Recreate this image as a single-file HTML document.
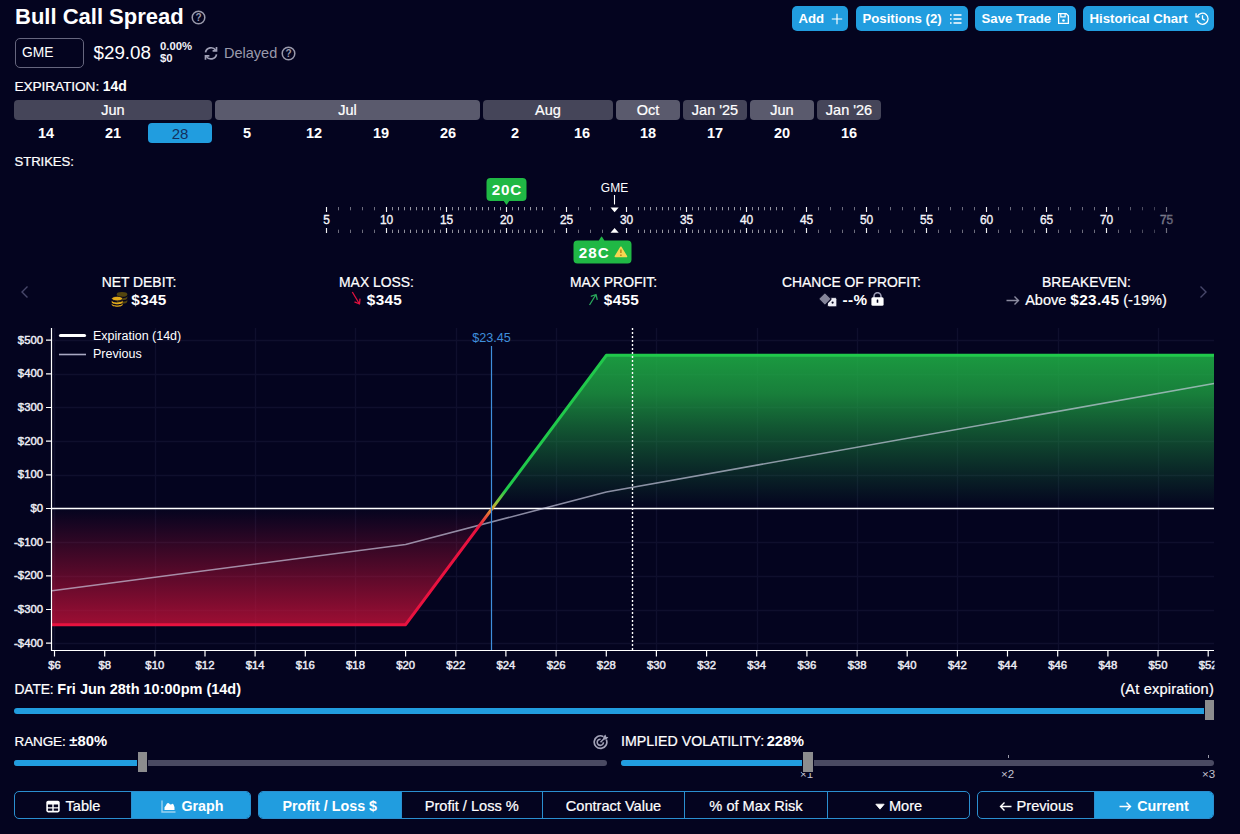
<!DOCTYPE html>
<html><head><meta charset="utf-8"><title>Bull Call Spread</title>
<style>
*{box-sizing:border-box;margin:0;padding:0}
html,body{width:1240px;height:834px;overflow:hidden;background:#04041f;color:#fff;font-family:"Liberation Sans",sans-serif;font-size:14px}
.a{position:absolute;white-space:nowrap}
.lbl,.st,.bb,.mon{-webkit-text-stroke:.22px currentColor}
.lbl b,.st b,.on{-webkit-text-stroke:0}
.btn{position:absolute;top:6px;height:25px;background:#219ddf;border-radius:5px;font-weight:bold;font-size:13.2px;line-height:25px;padding-left:6.5px;letter-spacing:0}
.mon{position:absolute;top:100px;height:20px;background:#5a5a6d;border-radius:4px;text-align:center;line-height:20px;font-size:14.5px}
.dk{background:#454559 !important}
.d{position:absolute;top:123px;width:64px;height:20px;text-align:center;line-height:21px;font-weight:bold;font-size:14.5px;border-radius:4px}
.lbl{position:absolute;font-size:13.5px;white-space:nowrap;letter-spacing:-0.1px}
.lbl b{font-size:14px;letter-spacing:0}
.st{position:absolute;top:274px;width:237px;text-align:center;font-size:13.9px;line-height:17px;white-space:nowrap}
.st b{font-size:15.3px;letter-spacing:.35px}
.bb{position:absolute;top:0;height:26px;line-height:28.500px;text-align:center;font-size:14.600px;border-right:1px solid #2a8fd0}
.grp{position:absolute;top:791px;height:28px;border:1px solid #2a8fd0;border-radius:5px;overflow:hidden}
.on{background:#219ddf;font-weight:bold;font-size:14.300px !important}
.trk{position:absolute;height:6px;border-radius:3px;background:#4a4a62}
.fil{position:absolute;height:6px;border-radius:3px;background:#219ddf}
.th{position:absolute;width:9.5px;height:20px;background:#8c8c8e;box-shadow:0 0 0 1px #04041f}
</style></head><body>
<!-- HEADER -->
<div class="a" style="left:15px;top:2.5px;font-size:22px;font-weight:bold;line-height:28px;letter-spacing:0">Bull Call Spread</div>
<svg class="a" style="left:190.500px;top:9.500px" width="15" height="15" viewBox="0 0 15 15"><circle cx="7.500" cy="7.500" r="6.300" fill="none" stroke="#9a9aac" stroke-width="1.500"/><text x="7.500" y="11" font-size="10" font-weight="bold" fill="#9a9aac" text-anchor="middle" font-family="Liberation Sans, sans-serif">?</text></svg>

<div class="btn" style="left:792px;width:56px">Add<svg style="position:absolute;left:39px;top:6.500px" width="12" height="12" viewBox="0 0 12 12"><path d="M6 .8v10.400M.8 6h10.400" stroke="#fff" stroke-width="1.150"/></svg></div>
<div class="btn" style="left:856px;width:112px">Positions (2)<svg style="position:absolute;left:93px;top:7px" width="13" height="12" viewBox="0 0 13 12"><path d="M4.5 2h8M4.5 6h8M4.5 10h8" stroke="#fff" stroke-width="1.3"/><path d="M1 2h1.6M1 6h1.6M1 10h1.6" stroke="#fff" stroke-width="1.6"/></svg></div>
<div class="btn" style="left:975px;width:101px">Save Trade<svg style="position:absolute;left:82px;top:6px" width="13" height="13" viewBox="0 0 12 12"><path d="M1.5 1.5h7l2 2v7h-9z" fill="none" stroke="#fff" stroke-width="1.2"/><path d="M3.5 1.5v3h4v-3" fill="none" stroke="#fff" stroke-width="1.1"/><circle cx="6" cy="7.8" r="1.2" fill="#fff"/></svg></div>
<div class="btn" style="left:1083px;width:131px">Historical Chart<svg style="position:absolute;left:111.500px;top:5px" width="15" height="15" viewBox="0 0 14 14"><path d="M2.2 5.2A5.2 5.2 0 1 1 2 8.6" fill="none" stroke="#fff" stroke-width="1.2"/><path d="M1 2.2v3.2h3.2" fill="none" stroke="#fff" stroke-width="1.2"/><path d="M7 4v3.3l2.2 1.3" fill="none" stroke="#fff" stroke-width="1.2"/></svg></div>

<div class="a" style="left:14.5px;top:38px;width:69.5px;height:29.5px;border:1px solid #66667e;border-radius:5px;line-height:28px;padding-left:6.5px;font-size:13.8px">GME</div>
<div class="a" style="left:93.5px;top:42px;font-size:18.8px;line-height:22px">$29.08</div>
<div class="a" style="left:160px;top:40px;font-size:11.300px;line-height:12px;font-weight:bold;color:#f0f0f8">0.00%<br>$0</div>
<svg class="a" style="left:202.500px;top:45.500px" width="16" height="15" viewBox="0 0 16 15"><path d="M2.500 6.400A5.600 5.600 0 0 1 12.700 4.300M13.500 8.300A5.600 5.600 0 0 1 3.300 10.400" fill="none" stroke="#a0a0b6" stroke-width="1.700"/><path d="M13.500 .9v3.900h-3.900M2.500 13.800v-3.900h3.900" fill="none" stroke="#a0a0b6" stroke-width="1.700"/></svg>
<div class="a" style="left:224px;top:45px;font-size:14.5px;line-height:17px;color:#9a9aac">Delayed</div>
<svg class="a" style="left:280.500px;top:45.500px" width="15" height="15" viewBox="0 0 15 15"><circle cx="7.500" cy="7.500" r="6.300" fill="none" stroke="#9a9aac" stroke-width="1.500"/><text x="7.500" y="11" font-size="10" font-weight="bold" fill="#9a9aac" text-anchor="middle" font-family="Liberation Sans, sans-serif">?</text></svg>

<!-- EXPIRATION -->
<div class="lbl" style="left:14.500px;top:78px;line-height:17px;font-size:13.700px">EXPIRATION: <b>14d</b></div>
<div class="mon dk" style="left:14px;width:198px">Jun</div>
<div class="mon" style="left:215px;width:265px">Jul</div>
<div class="mon dk" style="left:483px;width:130px">Aug</div>
<div class="mon" style="left:616px;width:64px">Oct</div>
<div class="mon dk" style="left:683px;width:64px">Jan '25</div>
<div class="mon" style="left:750px;width:64px">Jun</div>
<div class="mon dk" style="left:817px;width:64px">Jan '26</div>
<div class="d" style="left:14px">14</div>
<div class="d" style="left:81px">21</div>
<div class="d" style="left:148px;background:#219ddf;color:#12305e;font-weight:normal;font-size:15px">28</div>
<div class="d" style="left:215px">5</div>
<div class="d" style="left:282px">12</div>
<div class="d" style="left:349px">19</div>
<div class="d" style="left:416px">26</div>
<div class="d" style="left:483px">2</div>
<div class="d" style="left:550px">16</div>
<div class="d" style="left:616px">18</div>
<div class="d" style="left:683px">17</div>
<div class="d" style="left:750px">20</div>
<div class="d" style="left:817px">16</div>

<!-- STRIKES -->
<div class="lbl" style="left:14.500px;top:153px;line-height:17px;font-size:13.200px">STRIKES:</div>
<svg class="a" style="left:0;top:170px" width="1240" height="100" viewBox="0 170 1240 100" font-family="Liberation Sans, sans-serif">
<defs><linearGradient id="fade" x1="0" x2="1" y1="0" y2="0"><stop offset="0" stop-color="#04041f" stop-opacity="0"/><stop offset="1" stop-color="#04041f" stop-opacity="1"/></linearGradient></defs>
<g><path d="M326.5 207v5M326.5 233v-5" stroke="#fff" stroke-opacity="0.95" stroke-width="1.15"/><path d="M338.5 207v3.3M338.5 233v-3.3" stroke="#fff" stroke-opacity="0.42" stroke-width="1"/><path d="M350.5 207v3.3M350.5 233v-3.3" stroke="#fff" stroke-opacity="0.42" stroke-width="1"/><path d="M362.5 207v3.3M362.5 233v-3.3" stroke="#fff" stroke-opacity="0.42" stroke-width="1"/><path d="M374.5 207v3.3M374.5 233v-3.3" stroke="#fff" stroke-opacity="0.42" stroke-width="1"/><path d="M386.5 207v5M386.5 233v-5" stroke="#fff" stroke-opacity="0.95" stroke-width="1.15"/><path d="M392.5 207v3.3M392.5 233v-3.3" stroke="#fff" stroke-opacity="0.55" stroke-width="1"/><path d="M398.5 207v3.3M398.5 233v-3.3" stroke="#fff" stroke-opacity="0.6" stroke-width="1"/><path d="M404.5 207v3.3M404.5 233v-3.3" stroke="#fff" stroke-opacity="0.55" stroke-width="1"/><path d="M410.5 207v3.3M410.5 233v-3.3" stroke="#fff" stroke-opacity="0.6" stroke-width="1"/><path d="M416.5 207v3.3M416.5 233v-3.3" stroke="#fff" stroke-opacity="0.55" stroke-width="1"/><path d="M422.5 207v3.3M422.5 233v-3.3" stroke="#fff" stroke-opacity="0.6" stroke-width="1"/><path d="M428.5 207v3.3M428.5 233v-3.3" stroke="#fff" stroke-opacity="0.55" stroke-width="1"/><path d="M434.5 207v3.3M434.5 233v-3.3" stroke="#fff" stroke-opacity="0.6" stroke-width="1"/><path d="M440.5 207v3.3M440.5 233v-3.3" stroke="#fff" stroke-opacity="0.55" stroke-width="1"/><path d="M446.5 207v5M446.5 233v-5" stroke="#fff" stroke-opacity="0.95" stroke-width="1.15"/><path d="M452.5 207v3.3M452.5 233v-3.3" stroke="#fff" stroke-opacity="0.55" stroke-width="1"/><path d="M458.5 207v3.3M458.5 233v-3.3" stroke="#fff" stroke-opacity="0.6" stroke-width="1"/><path d="M464.5 207v3.3M464.5 233v-3.3" stroke="#fff" stroke-opacity="0.55" stroke-width="1"/><path d="M470.5 207v3.3M470.5 233v-3.3" stroke="#fff" stroke-opacity="0.6" stroke-width="1"/><path d="M476.5 207v3.3M476.5 233v-3.3" stroke="#fff" stroke-opacity="0.55" stroke-width="1"/><path d="M482.5 207v3.3M482.5 233v-3.3" stroke="#fff" stroke-opacity="0.6" stroke-width="1"/><path d="M488.5 207v3.3M488.5 233v-3.3" stroke="#fff" stroke-opacity="0.55" stroke-width="1"/><path d="M494.5 207v3.3M494.5 233v-3.3" stroke="#fff" stroke-opacity="0.6" stroke-width="1"/><path d="M500.5 207v3.3M500.5 233v-3.3" stroke="#fff" stroke-opacity="0.55" stroke-width="1"/><path d="M506.5 207v5M506.5 233v-5" stroke="#fff" stroke-opacity="0.95" stroke-width="1.15"/><path d="M512.5 207v3.3M512.5 233v-3.3" stroke="#fff" stroke-opacity="0.55" stroke-width="1"/><path d="M518.5 207v3.3M518.5 233v-3.3" stroke="#fff" stroke-opacity="0.6" stroke-width="1"/><path d="M524.5 207v3.3M524.5 233v-3.3" stroke="#fff" stroke-opacity="0.55" stroke-width="1"/><path d="M530.5 207v3.3M530.5 233v-3.3" stroke="#fff" stroke-opacity="0.6" stroke-width="1"/><path d="M536.5 207v3.3M536.5 233v-3.3" stroke="#fff" stroke-opacity="0.55" stroke-width="1"/><path d="M542.5 207v3.3M542.5 233v-3.3" stroke="#fff" stroke-opacity="0.6" stroke-width="1"/><path d="M554.5 207v3.3M554.5 233v-3.3" stroke="#fff" stroke-opacity="0.42" stroke-width="1"/><path d="M566.5 207v5M566.5 233v-5" stroke="#fff" stroke-opacity="0.95" stroke-width="1.15"/><path d="M578.5 207v3.3M578.5 233v-3.3" stroke="#fff" stroke-opacity="0.42" stroke-width="1"/><path d="M590.5 207v3.3M590.5 233v-3.3" stroke="#fff" stroke-opacity="0.42" stroke-width="1"/><path d="M602.5 207v3.3M602.5 233v-3.3" stroke="#fff" stroke-opacity="0.42" stroke-width="1"/><path d="M626.5 207v5M626.5 233v-5" stroke="#fff" stroke-opacity="0.95" stroke-width="1.15"/><path d="M638.5 207v3.3M638.5 233v-3.3" stroke="#fff" stroke-opacity="0.6" stroke-width="1"/><path d="M644.5 207v3.3M644.5 233v-3.3" stroke="#fff" stroke-opacity="0.55" stroke-width="1"/><path d="M650.5 207v3.3M650.5 233v-3.3" stroke="#fff" stroke-opacity="0.6" stroke-width="1"/><path d="M656.5 207v3.3M656.5 233v-3.3" stroke="#fff" stroke-opacity="0.55" stroke-width="1"/><path d="M662.5 207v3.3M662.5 233v-3.3" stroke="#fff" stroke-opacity="0.6" stroke-width="1"/><path d="M668.5 207v3.3M668.5 233v-3.3" stroke="#fff" stroke-opacity="0.55" stroke-width="1"/><path d="M674.5 207v3.3M674.5 233v-3.3" stroke="#fff" stroke-opacity="0.6" stroke-width="1"/><path d="M680.5 207v3.3M680.5 233v-3.3" stroke="#fff" stroke-opacity="0.55" stroke-width="1"/><path d="M686.5 207v5M686.5 233v-5" stroke="#fff" stroke-opacity="0.95" stroke-width="1.15"/><path d="M692.5 207v3.3M692.5 233v-3.3" stroke="#fff" stroke-opacity="0.55" stroke-width="1"/><path d="M698.5 207v3.3M698.5 233v-3.3" stroke="#fff" stroke-opacity="0.6" stroke-width="1"/><path d="M704.5 207v3.3M704.5 233v-3.3" stroke="#fff" stroke-opacity="0.55" stroke-width="1"/><path d="M710.5 207v3.3M710.5 233v-3.3" stroke="#fff" stroke-opacity="0.6" stroke-width="1"/><path d="M716.5 207v3.3M716.5 233v-3.3" stroke="#fff" stroke-opacity="0.55" stroke-width="1"/><path d="M722.5 207v3.3M722.5 233v-3.3" stroke="#fff" stroke-opacity="0.6" stroke-width="1"/><path d="M728.5 207v3.3M728.5 233v-3.3" stroke="#fff" stroke-opacity="0.55" stroke-width="1"/><path d="M734.5 207v3.3M734.5 233v-3.3" stroke="#fff" stroke-opacity="0.6" stroke-width="1"/><path d="M740.5 207v3.3M740.5 233v-3.3" stroke="#fff" stroke-opacity="0.55" stroke-width="1"/><path d="M746.5 207v5M746.5 233v-5" stroke="#fff" stroke-opacity="0.95" stroke-width="1.15"/><path d="M752.5 207v3.3M752.5 233v-3.3" stroke="#fff" stroke-opacity="0.55" stroke-width="1"/><path d="M758.5 207v3.3M758.5 233v-3.3" stroke="#fff" stroke-opacity="0.6" stroke-width="1"/><path d="M764.5 207v3.3M764.5 233v-3.3" stroke="#fff" stroke-opacity="0.55" stroke-width="1"/><path d="M770.5 207v3.3M770.5 233v-3.3" stroke="#fff" stroke-opacity="0.6" stroke-width="1"/><path d="M776.5 207v3.3M776.5 233v-3.3" stroke="#fff" stroke-opacity="0.55" stroke-width="1"/><path d="M782.5 207v3.3M782.5 233v-3.3" stroke="#fff" stroke-opacity="0.6" stroke-width="1"/><path d="M794.5 207v3.3M794.5 233v-3.3" stroke="#fff" stroke-opacity="0.42" stroke-width="1"/><path d="M806.5 207v5M806.5 233v-5" stroke="#fff" stroke-opacity="0.95" stroke-width="1.15"/><path d="M818.5 207v3.3M818.5 233v-3.3" stroke="#fff" stroke-opacity="0.42" stroke-width="1"/><path d="M830.5 207v3.3M830.5 233v-3.3" stroke="#fff" stroke-opacity="0.42" stroke-width="1"/><path d="M842.5 207v3.3M842.5 233v-3.3" stroke="#fff" stroke-opacity="0.42" stroke-width="1"/><path d="M854.5 207v3.3M854.5 233v-3.3" stroke="#fff" stroke-opacity="0.42" stroke-width="1"/><path d="M866.5 207v5M866.5 233v-5" stroke="#fff" stroke-opacity="0.95" stroke-width="1.15"/><path d="M878.5 207v3.3M878.5 233v-3.3" stroke="#fff" stroke-opacity="0.42" stroke-width="1"/><path d="M890.5 207v3.3M890.5 233v-3.3" stroke="#fff" stroke-opacity="0.42" stroke-width="1"/><path d="M902.5 207v3.3M902.5 233v-3.3" stroke="#fff" stroke-opacity="0.42" stroke-width="1"/><path d="M914.5 207v3.3M914.5 233v-3.3" stroke="#fff" stroke-opacity="0.42" stroke-width="1"/><path d="M926.5 207v5M926.5 233v-5" stroke="#fff" stroke-opacity="0.95" stroke-width="1.15"/><path d="M938.5 207v3.3M938.5 233v-3.3" stroke="#fff" stroke-opacity="0.42" stroke-width="1"/><path d="M950.5 207v3.3M950.5 233v-3.3" stroke="#fff" stroke-opacity="0.42" stroke-width="1"/><path d="M962.5 207v3.3M962.5 233v-3.3" stroke="#fff" stroke-opacity="0.42" stroke-width="1"/><path d="M974.5 207v3.3M974.5 233v-3.3" stroke="#fff" stroke-opacity="0.42" stroke-width="1"/><path d="M986.5 207v5M986.5 233v-5" stroke="#fff" stroke-opacity="0.95" stroke-width="1.15"/><path d="M998.5 207v3.3M998.5 233v-3.3" stroke="#fff" stroke-opacity="0.42" stroke-width="1"/><path d="M1010.5 207v3.3M1010.5 233v-3.3" stroke="#fff" stroke-opacity="0.42" stroke-width="1"/><path d="M1022.5 207v3.3M1022.5 233v-3.3" stroke="#fff" stroke-opacity="0.42" stroke-width="1"/><path d="M1034.5 207v3.3M1034.5 233v-3.3" stroke="#fff" stroke-opacity="0.42" stroke-width="1"/><path d="M1046.5 207v5M1046.5 233v-5" stroke="#fff" stroke-opacity="0.95" stroke-width="1.15"/><path d="M1058.5 207v3.3M1058.5 233v-3.3" stroke="#fff" stroke-opacity="0.42" stroke-width="1"/><path d="M1070.5 207v3.3M1070.5 233v-3.3" stroke="#fff" stroke-opacity="0.42" stroke-width="1"/><path d="M1082.5 207v3.3M1082.5 233v-3.3" stroke="#fff" stroke-opacity="0.42" stroke-width="1"/><path d="M1094.5 207v3.3M1094.5 233v-3.3" stroke="#fff" stroke-opacity="0.42" stroke-width="1"/><path d="M1106.5 207v5M1106.5 233v-5" stroke="#fff" stroke-opacity="0.95" stroke-width="1.15"/><path d="M1118.5 207v3.3M1118.5 233v-3.3" stroke="#fff" stroke-opacity="0.42" stroke-width="1"/><path d="M1130.5 207v3.3M1130.5 233v-3.3" stroke="#fff" stroke-opacity="0.42" stroke-width="1"/><path d="M1142.5 207v3.3M1142.5 233v-3.3" stroke="#fff" stroke-opacity="0.42" stroke-width="1"/><path d="M1154.5 207v3.3M1154.5 233v-3.3" stroke="#fff" stroke-opacity="0.42" stroke-width="1"/><path d="M1166.5 207v5M1166.5 233v-5" stroke="#fff" stroke-opacity="0.95" stroke-width="1.15"/></g>
<g fill="#f4f4fa" stroke="#f4f4fa" stroke-width=".35" font-size="11.900"><text x="326.5" y="223.700" text-anchor="middle">5</text><text x="386.5" y="223.700" text-anchor="middle">10</text><text x="446.5" y="223.700" text-anchor="middle">15</text><text x="506.5" y="223.700" text-anchor="middle">20</text><text x="566.5" y="223.700" text-anchor="middle">25</text><text x="626.5" y="223.700" text-anchor="middle">30</text><text x="686.5" y="223.700" text-anchor="middle">35</text><text x="746.5" y="223.700" text-anchor="middle">40</text><text x="806.5" y="223.700" text-anchor="middle">45</text><text x="866.5" y="223.700" text-anchor="middle">50</text><text x="926.5" y="223.700" text-anchor="middle">55</text><text x="986.5" y="223.700" text-anchor="middle">60</text><text x="1046.5" y="223.700" text-anchor="middle">65</text><text x="1106.5" y="223.700" text-anchor="middle">70</text><text x="1166.5" y="223.700" text-anchor="middle">75</text></g>
<rect x="1112" y="200" width="100" height="40" fill="url(#fade)"/>
<rect x="1212" y="200" width="28" height="40" fill="#04041f"/>
<!-- 20C -->
<path d="M490.500 178h32a4 4 0 0 1 4 4v15a4 4 0 0 1 -4 4h-13.200l-2.400 3.600q-.4 .5 -.8 0l-2.400-3.600H490.500a4 4 0 0 1 -4-4v-15a4 4 0 0 1 4-4z" fill="#20b845"/>
<text x="506.800" y="195.300" font-size="15.200" letter-spacing=".8" font-weight="bold" fill="#fff" text-anchor="middle">20C</text>
<!-- GME marker -->
<text x="614.500" y="192" font-size="12" fill="#fff" text-anchor="middle">GME</text>
<path d="M614.500 195v9.500" stroke="#fff" stroke-width="1.100"/>
<path d="M610.500 207.500h8.200l-4.100 4.700z" fill="#fff"/>
<path d="M610.500 232.700h8.200l-4.100-4.700z" fill="#fff"/>
<!-- 28C -->
<path d="M577.500 240.500h21.300l2.400-3.700q.4-.5 .8 0l2.400 3.700H627.500a4 4 0 0 1 4 4v15a4 4 0 0 1 -4 4H577.500a4 4 0 0 1 -4-4v-15a4 4 0 0 1 4-4z" fill="#20b845"/>
<text x="578.800" y="257.500" font-size="15.200" letter-spacing="1" font-weight="bold" fill="#fff">28C</text>
<path d="M620.900 247.200l5.600 9.300h-11.200z" fill="#f5d652" stroke="#f5d652" stroke-width="1.500" stroke-linejoin="round"/>
<path d="M620.900 249.600v3.400M620.900 254.500v1.400" stroke="#b9821c" stroke-width="1.500"/>
</svg>

<!-- STATS -->
<svg class="a" style="left:20px;top:285px" width="10" height="14" viewBox="0 0 10 14"><path d="M7.500 1.500L2 7l5.500 5.500" fill="none" stroke="#47476a" stroke-width="1.400"/></svg>
<svg class="a" style="left:1198px;top:285px" width="10" height="14" viewBox="0 0 10 14"><path d="M2.500 1.500L8 7l-5.500 5.500" fill="none" stroke="#47476a" stroke-width="1.400"/></svg>
<div class="st" style="left:20.500px">NET DEBIT:<br><svg style="vertical-align:-2px;margin-right:3px" width="17" height="16" viewBox="0 0 17 16"><g fill="#54450f"><ellipse cx="11" cy="3.400" rx="5.300" ry="2.300"/><path d="M5.700 5c0 3 10.600 3 10.600 0v2c0 3-10.600 3-10.600 0zM5.700 8.500c0 3 10.600 3 10.600 0v2c0 3-10.600 3-10.600 0z"/></g><g fill="#e2aa1a"><ellipse cx="6.200" cy="7.600" rx="5.500" ry="2.300" stroke="#04041f" stroke-width=".8"/><path d="M.7 9.300c0 3 11 3 11 0v1.700c0 3-11 3-11 0zM.7 12.300c0 3 11 3 11 0v1.300c0 3-11 3-11 0z"/></g></svg><b>$345</b></div>
<div class="st" style="left:258px">MAX LOSS:<br><svg style="vertical-align:0px;margin-right:6px" width="10" height="14" viewBox="0 0 10 14"><path d="M1.300 1l7.200 12M9 7.600l-.5 5.400l-5-2.200" fill="none" stroke="#e0123f" stroke-width="1.300" stroke-linejoin="round"/></svg><b>$345</b></div>
<div class="st" style="left:495px">MAX PROFIT:<br><svg style="vertical-align:-1px;margin-right:6px" width="10" height="13" viewBox="0 0 10 13"><path d="M1.500 12l6.500-10.500M2.800 3.300l5.200-1.800l1.300 5.300" fill="none" stroke="#2aa85c" stroke-width="1.300" stroke-linejoin="round"/></svg><b>$455</b></div>
<div class="st" style="left:733px">CHANCE OF PROFIT:<br><svg style="vertical-align:-1.500px;margin-right:6px" width="18" height="14" viewBox="0 0 18 14"><rect x="8.500" y="4.600" width="9.300" height="9.200" rx="1.600" fill="#ededf4" stroke="#04041f" stroke-width=".8"/><rect x="1.300" y="1.300" width="9.200" height="9.200" rx="1.200" transform="rotate(45 5.900 5.900)" fill="#85859a" stroke="#04041f" stroke-width="1.100"/><circle cx="13.600" cy="9.600" r="1.100" fill="#04041f"/></svg><b>--%</b><svg style="vertical-align:-1px;margin-left:4px" width="13" height="14" viewBox="0 0 13 14"><path d="M3 6V4.200a3.500 3.500 0 0 1 7 0V6" fill="none" stroke="#9a9ab2" stroke-width="1.600"/><rect x=".4" y="5.300" width="12.200" height="8.500" rx="1.500" fill="#fff"/><rect x="5.700" y="7.600" width="1.600" height="3.200" rx=".5" fill="#04041f"/></svg></div>
<div class="st" style="left:968px">BREAKEVEN:<br><span style="font-size:14.500px"><svg style="vertical-align:-1px;margin-right:5px" width="14" height="11" viewBox="0 0 14 11"><path d="M.5 5.500h12M8.500 1.500l4 4l-4 4" fill="none" stroke="#8b8ba0" stroke-width="1.400"/></svg>Above <b>$23.45</b> (-19%)</span></div>

<svg class="a" style="left:0;top:322px" width="1240" height="356" viewBox="0 322 1240 356" font-family="Liberation Sans, sans-serif">
<defs>
<linearGradient id="gG" gradientUnits="userSpaceOnUse" x1="0" y1="355.3" x2="0" y2="508.5"><stop offset="0" stop-color="#1fb446" stop-opacity=".85"/><stop offset=".25" stop-color="#1fa844" stop-opacity=".75"/><stop offset="1" stop-color="#1c8a40" stop-opacity="0"/></linearGradient>
<linearGradient id="gR" gradientUnits="userSpaceOnUse" x1="0" y1="508.5" x2="0" y2="624.7"><stop offset="0" stop-color="#c81038" stop-opacity="0"/><stop offset="1" stop-color="#d0113a" stop-opacity=".75"/></linearGradient>
<linearGradient id="gL" gradientUnits="userSpaceOnUse" x1="0" y1="355.3" x2="0" y2="624.7"><stop offset="0" stop-color="#20c94b"/><stop offset=".50" stop-color="#20c94b"/><stop offset=".545" stop-color="#8cc43c"/><stop offset=".569" stop-color="#e0a030"/><stop offset=".60" stop-color="#e8503a"/><stop offset=".64" stop-color="#e8123f"/><stop offset="1" stop-color="#e8123f"/></linearGradient>
<clipPath id="cp"><rect x="52.0" y="326" width="1162.0" height="324.5"/></clipPath>
</defs>
<path d="M52.0 643.5H1214.0M52.0 610.5H1214.0M52.0 576.5H1214.0M52.0 542.5H1214.0M52.0 508.5H1214.0M52.0 475.5H1214.0M52.0 441.5H1214.0M52.0 407.5H1214.0M52.0 374.5H1214.0M52.0 340.5H1214.0M54.5 328V650M155.5 328V650M255.5 328V650M355.5 328V650M456.5 328V650M556.5 328V650M656.5 328V650M757.5 328V650M857.5 328V650M957.5 328V650M1058.5 328V650M1158.5 328V650" stroke="#9c9ce0" stroke-opacity=".075" stroke-width="1.4" fill="none"/>
<path d="M492.1 508.5L606.3 355.3H1214.0V508.5z" fill="url(#gG)"/>
<path d="M52.0 508.5H492.1L405.6 624.7H52.0z" fill="url(#gR)"/>
<path d="M52.0 508.5H1214.0" stroke="#fff" stroke-width="1.3"/>
<path d="M52.0 590.7L405.6 544.5L606.3 492.0L1214.0 383.5" stroke="#d0d0e6" stroke-opacity=".66" stroke-width="1.600" fill="none" stroke-linejoin="round"/>
<path d="M52.0 624.7H405.6L606.3 355.3H1214.0" stroke="url(#gL)" stroke-width="3" fill="none" stroke-linejoin="round" clip-path="url(#cp)"/>
<path d="M491.5 346V650" stroke="#3f8fdc" stroke-width="1.2"/>
<text x="491.5" y="342" font-size="12.600" fill="#3f8fdc" text-anchor="middle">$23.45</text>
<path d="M632.5 328V650" stroke="#fff" stroke-width="1.4" stroke-dasharray="2 2"/>
<path d="M51.5 328V651M51 650.5H1214.0M46 643.2h5.5M46 609.5h5.5M46 575.9h5.5M46 542.2h5.5M46 508.5h5.5M46 474.8h5.5M46 441.1h5.5M46 407.5h5.5M46 373.8h5.5M46 340.1h5.5M54.5 650.5v6M104.7 650.5v6M154.8 650.5v6M205.0 650.5v6M255.1 650.5v6M305.3 650.5v6M355.5 650.5v6M405.6 650.5v6M455.8 650.5v6M505.9 650.5v6M556.1 650.5v6M606.3 650.5v6M656.4 650.5v6M706.6 650.5v6M756.7 650.5v6M806.9 650.5v6M857.1 650.5v6M907.2 650.5v6M957.4 650.5v6M1007.5 650.5v6M1057.7 650.5v6M1107.9 650.5v6M1158.0 650.5v6M1208.2 650.5v6" stroke="#fff" stroke-width="1.2" fill="none"/>
<g font-size="11.300" fill="#ececf4" stroke="#ececf4" stroke-width=".45" text-anchor="end"><text x="43" y="646.6">-$400</text><text x="43" y="612.9">-$300</text><text x="43" y="579.3">-$200</text><text x="43" y="545.6">-$100</text><text x="43" y="511.9">$0</text><text x="43" y="478.2">$100</text><text x="43" y="444.5">$200</text><text x="43" y="410.9">$300</text><text x="43" y="377.2">$400</text><text x="43" y="343.5">$500</text></g>
<g font-size="11.300" fill="#ececf4" stroke="#ececf4" stroke-width=".45" text-anchor="middle"><text x="54.5" y="669">$6</text><text x="104.7" y="669">$8</text><text x="154.8" y="669">$10</text><text x="205.0" y="669">$12</text><text x="255.1" y="669">$14</text><text x="305.3" y="669">$16</text><text x="355.5" y="669">$18</text><text x="405.6" y="669">$20</text><text x="455.8" y="669">$22</text><text x="505.9" y="669">$24</text><text x="556.1" y="669">$26</text><text x="606.3" y="669">$28</text><text x="656.4" y="669">$30</text><text x="706.6" y="669">$32</text><text x="756.7" y="669">$34</text><text x="806.9" y="669">$36</text><text x="857.1" y="669">$38</text><text x="907.2" y="669">$40</text><text x="957.4" y="669">$42</text><text x="1007.5" y="669">$44</text><text x="1057.7" y="669">$46</text><text x="1107.9" y="669">$48</text><text x="1158.0" y="669">$50</text><text x="1208.2" y="669">$52</text></g>
<rect x="1214.5" y="655" width="26" height="20" fill="#04041f"/>
<path d="M60.500 335.500h24" stroke="#fff" stroke-width="3.200" stroke-linecap="round"/><path d="M59 354.500h27" stroke="#a9a9c2" stroke-width="1.6"/><g font-size="12.500" fill="#fff"><text x="93" y="340">Expiration (14d)</text><text x="93" y="358">Previous</text></g>
</svg>

<!-- CONTROLS -->
<div class="lbl" style="left:14.500px;top:681px;line-height:17px;font-size:13.800px">DATE: <b style="font-size:14.500px">Fri Jun 28th 10:00pm (14d)</b></div>
<div class="lbl" style="right:26px;top:681px;line-height:17px;font-size:14.600px;letter-spacing:.2px">(At expiration)</div>
<div class="fil" style="left:14px;top:708px;width:1200px"></div>
<div class="th" style="left:1204.700px;top:699.800px"></div>

<div class="lbl" style="left:14.500px;top:733px;line-height:17px;font-size:13.500px">RANGE: <b style="font-size:14.800px">±80%</b></div>
<div class="trk" style="left:14px;top:760px;width:593px"></div>
<div class="fil" style="left:14px;top:760px;width:129px"></div>
<div class="th" style="left:137.500px;top:752px"></div>
<svg class="a" style="left:592.500px;top:733.500px" width="16" height="16" viewBox="0 0 16 16"><path d="M13.300 5.600A6.300 6.300 0 1 1 10.200 2.400" fill="none" stroke="#a3a3b8" stroke-width="1.700"/><path d="M10.400 8.200A3.100 3.100 0 1 1 7.600 5.200" fill="none" stroke="#a3a3b8" stroke-width="1.600"/><path d="M7.500 8.300L11.500 4.300" stroke="#a3a3b8" stroke-width="1.600"/><path d="M10.300 5.600V2.600L12.600.4l.5 2.300l2.300.5L13.200 5.600z" fill="#a3a3b8"/></svg>
<div class="lbl" style="left:621px;top:733px;line-height:17px;font-size:14.200px;letter-spacing:0">IMPLIED VOLATILITY: <b style="font-size:14.600px;margin-left:-1.500px">228%</b></div>
<div class="trk" style="left:621px;top:760px;width:593px"></div>
<div class="fil" style="left:621px;top:760px;width:187px"></div>
<div class="a" style="left:807px;top:755px;width:1px;height:3px;background:#9a9aa8"></div>
<div class="a" style="left:1008px;top:755px;width:1px;height:3px;background:#9a9aa8"></div>
<div class="a" style="left:1208px;top:755px;width:1px;height:3px;background:#9a9aa8"></div>
<div class="a" style="left:795.5px;top:767.500px;width:22px;text-align:center;font-size:11.500px;line-height:13px;color:#c4c4d2">×1</div>
<div class="a" style="left:996.5px;top:767.500px;width:22px;text-align:center;font-size:11.500px;line-height:13px;color:#c4c4d2">×2</div>
<div class="a" style="left:1197.5px;top:767.500px;width:22px;text-align:center;font-size:11.500px;line-height:13px;color:#c4c4d2">×3</div>
<div class="th" style="left:803px;top:752px"></div>

<div class="grp" style="left:14px;width:237px">
 <div class="bb" style="left:0;width:117px"><svg style="vertical-align:-2px;margin-right:6px" width="14" height="13" viewBox="0 0 14 13"><rect x=".3" y=".8" width="13.400" height="11.600" rx="1.800" fill="#fff"/><path d="M1.900 4.600h4.400v2.600H1.900zM7.700 4.600h4.400v2.600H7.700zM1.900 8.400h4.400v2.400H1.900zM7.700 8.400h4.400v2.400H7.700z" fill="#04041f"/></svg>Table</div>
 <div class="bb on" style="left:117px;width:118px;border-right:0;padding-left:3px"><svg style="vertical-align:-2px;margin-right:5px" width="15" height="13" viewBox="0 0 15 13"><path d="M1 .5v11.500h13.500" fill="none" stroke="#fff" stroke-opacity=".55" stroke-width="1.400"/><path d="M3.500 10V7.200c1.500-1 2-4.200 3.500-4.200s1.500 1.500 2.500 1.500s1.200-.8 2-.8s1.500 1.800 2 3.500v2.800z" fill="#fff"/></svg>Graph</div>
</div>
<div class="grp" style="left:258px;width:712px">
 <div class="bb on" style="left:0;width:142.500px">Profit / Loss $</div>
 <div class="bb" style="left:142.500px;width:141.500px">Profit / Loss %</div>
 <div class="bb" style="left:284px;width:142px">Contract Value</div>
 <div class="bb" style="left:426px;width:143px">% of Max Risk</div>
 <div class="bb" style="left:569px;width:141px;border-right:0"><svg style="vertical-align:1px;margin-right:4px" width="10" height="7" viewBox="0 0 10 7"><path d="M.8 1.200h8.400L5 6.200z" fill="#fff" stroke="#fff" stroke-width=".8" stroke-linejoin="round"/></svg>More</div>
</div>
<div class="grp" style="left:977px;width:237px">
 <div class="bb" style="left:0;width:117px"><svg style="vertical-align:-1px;margin-right:5px" width="13" height="11" viewBox="0 0 13 11"><path d="M12.500 5.500H1.500M5.500 1.500l-4 4l4 4" fill="none" stroke="#fff" stroke-width="1.400"/></svg>Previous</div>
 <div class="bb on" style="left:117px;width:118px;border-right:0"><svg style="vertical-align:-1px;margin-right:5px" width="13" height="11" viewBox="0 0 13 11"><path d="M.5 5.500h11M7.500 1.500l4 4l-4 4" fill="none" stroke="#fff" stroke-width="1.400"/></svg>Current</div>
</div>
</body></html>
